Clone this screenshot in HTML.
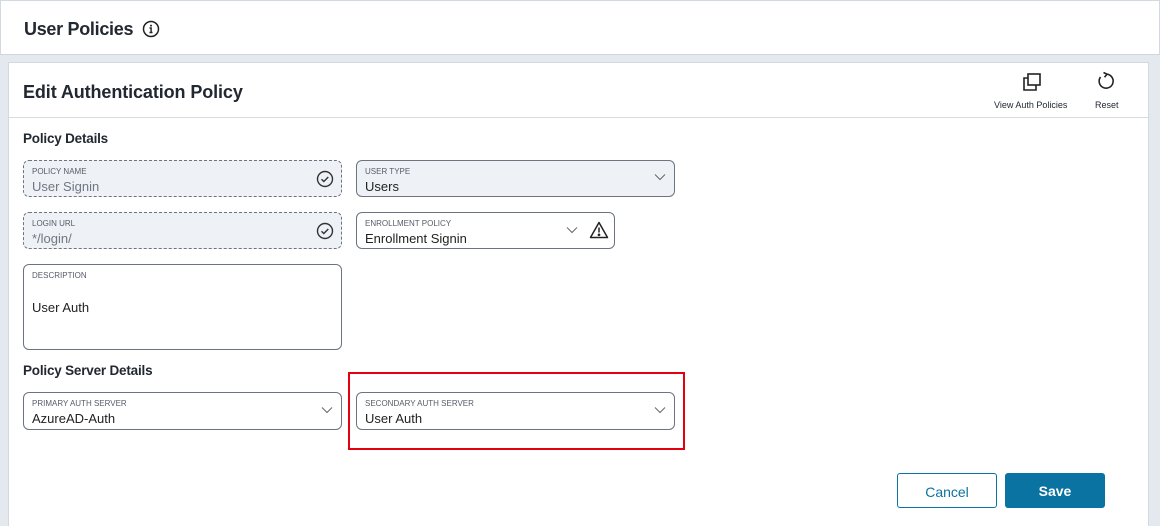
<!DOCTYPE html>
<html><head><style>
*{box-sizing:border-box;margin:0;padding:0}
html,body{width:1160px;height:526px;overflow:hidden}
body{background:#e4e9ef;font-family:"Liberation Sans",sans-serif;color:#222831;position:relative}
.top{position:absolute;left:0;top:0;width:1160px;height:55px;background:#fff;border:1px solid #d3d9e0;border-bottom:1px solid #cfd6de}
.top h1{position:absolute;left:23px;top:18px;font-size:18px;font-weight:bold;letter-spacing:-0.3px}
.card{position:absolute;left:8px;top:62px;width:1141px;height:464px;background:#fff;border:1px solid #d3d9e0;border-bottom:none}
.ch{position:absolute;left:0;top:0;width:100%;height:55px;border-bottom:1px solid #d6dbe1}
.ch h2{position:absolute;left:14px;top:19px;font-size:18px;font-weight:bold;letter-spacing:-0.1px}
.abs{position:absolute}
.sec{font-size:13.5px;font-weight:bold;letter-spacing:-0.2px}
.f{position:absolute;border:1px solid #6b7480;border-radius:6px;background:#fff}
.f .l{position:absolute;left:8px;top:6px;font-size:8px;color:#555d68;text-transform:uppercase}
.f .v{position:absolute;left:8px;top:18px;font-size:13px;color:#222}
.dis{background:#eef1f5;border-style:dashed}
.dis .v{color:#6f7782}
.gray{background:#eef1f5}
.btn{position:absolute;top:473px;width:100px;height:35px;border-radius:3px;font-size:14px;text-align:center;line-height:37px}
</style></head><body>
<div class="top"><h1>User Policies</h1>
<svg class="abs" style="left:141px;top:19px" width="18" height="18" viewBox="0 0 18 18"><circle cx="9" cy="9" r="7.5" fill="none" stroke="#222" stroke-width="1.5"/><circle cx="9" cy="5.6" r="1" fill="#222"/><path d="M7.5 8h1.6v4.5M7.5 12.5h3" stroke="#222" stroke-width="1.4" fill="none"/></svg>
</div>
<div class="card">
<div class="ch"><h2>Edit Authentication Policy</h2>
<svg class="abs" style="left:1013px;top:9px" width="20" height="20" viewBox="0 0 20 20" fill="none" stroke="#222" stroke-width="1.6"><rect x="6" y="2" width="12" height="11"/><path d="M6 6H2v12h12v-5"/></svg>
<div class="abs" style="left:985px;top:37px;font-size:9px">View Auth Policies</div>
<svg class="abs" style="left:1087px;top:8px" width="20" height="20" viewBox="0 0 20 20" fill="none" stroke="#222" stroke-width="1.6"><path d="M11 3.2A7 7 0 1 1 4.5 6"/><path d="M7.5 1.5L11 3.2 8.5 6.3"/></svg>
<div class="abs" style="left:1086px;top:37px;font-size:9px">Reset</div>
</div>
</div>
<div class="abs sec" style="left:23px;top:131px">Policy Details</div>
<div class="f dis" style="left:23px;top:160px;width:319px;height:37px"><div class="l">Policy Name</div><div class="v">User Signin</div>
<svg class="abs" style="right:7px;top:9px" width="18" height="18" viewBox="0 0 18 18" fill="none" stroke="#333" stroke-width="1.4"><circle cx="9" cy="9" r="7.5"/><path d="M5.5 9.2l2.3 2.3 4.5-4.5"/></svg></div>
<div class="f gray" style="left:356px;top:160px;width:319px;height:37px"><div class="l">User Type</div><div class="v">Users</div>
<svg class="abs" style="right:8px;top:12px" width="12" height="8" viewBox="0 0 12 8" fill="none" stroke="#666" stroke-width="1"><path d="M1 1.5l5 5 5-5"/></svg></div>
<div class="f dis" style="left:23px;top:212px;width:319px;height:37px"><div class="l">Login URL</div><div class="v">*/login/</div>
<svg class="abs" style="right:7px;top:9px" width="18" height="18" viewBox="0 0 18 18" fill="none" stroke="#333" stroke-width="1.4"><circle cx="9" cy="9" r="7.5"/><path d="M5.5 9.2l2.3 2.3 4.5-4.5"/></svg></div>
<div class="f" style="left:356px;top:212px;width:259px;height:37px"><div class="l">Enrollment Policy</div><div class="v">Enrollment Signin</div>
<svg class="abs" style="left:209px;top:13px" width="12" height="8" viewBox="0 0 12 8" fill="none" stroke="#666" stroke-width="1"><path d="M1 1.5l5 5 5-5"/></svg>
<svg class="abs" style="left:232px;top:8px" width="20" height="18" viewBox="0 0 20 18" fill="none" stroke="#222" stroke-width="1.5"><path d="M10 1.5L1.5 16.5h17z" stroke-linejoin="round"/><path d="M10 6.5v5"/><circle cx="10" cy="13.8" r="0.6" fill="#222"/></svg></div>
<div class="f" style="left:23px;top:264px;width:319px;height:86px"><div class="l">Description</div><div class="v" style="top:35px">User Auth</div></div>
<div class="abs sec" style="left:23px;top:363px">Policy Server Details</div>
<div class="f" style="left:23px;top:392px;width:319px;height:38px"><div class="l">Primary Auth Server</div><div class="v">AzureAD-Auth</div>
<svg class="abs" style="right:8px;top:13px" width="12" height="8" viewBox="0 0 12 8" fill="none" stroke="#666" stroke-width="1"><path d="M1 1.5l5 5 5-5"/></svg></div>
<div class="abs" style="left:348px;top:372px;width:337px;height:78px;border:2px solid #e3000f"></div>
<div class="f" style="left:356px;top:392px;width:319px;height:38px"><div class="l">Secondary Auth Server</div><div class="v">User Auth</div>
<svg class="abs" style="right:8px;top:13px" width="12" height="8" viewBox="0 0 12 8" fill="none" stroke="#666" stroke-width="1"><path d="M1 1.5l5 5 5-5"/></svg></div>
<div class="btn" style="left:897px;border:1px solid #0a73a1;color:#0a73a1;background:#fff">Cancel</div>
<div class="btn" style="left:1005px;background:#0a73a1;color:#fff;font-weight:bold">Save</div>
</body></html>
